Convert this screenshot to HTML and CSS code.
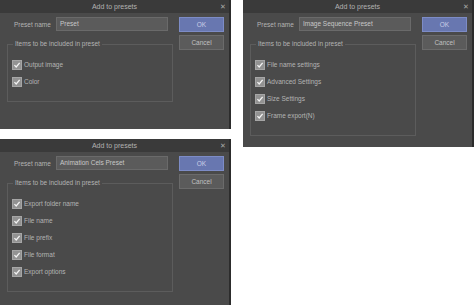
FILE: index.html
```html
<!doctype html>
<html lang="en">
  <head>
    <meta charset="UTF-8" />
    <meta name="viewport" content="width=device-width, initial-scale=1.0" />
    <title>Add to presets</title>
    <link rel="stylesheet" href="styles.css">
  </head>
  <body>
    <div class="column">
      <!-- Output image preset -->
      <div class="dialog dialog-small">
        <div class="titlebar">
          <span></span>
          <span class="title">Add to presets</span>
          <span class="close">✕</span>
        </div>
        <div class="dialog-body">
          <div class="main">
            <div class="name-row">
              <label>Preset name</label>
              <div class="name-input">Preset</div>
            </div>
            <div class="group">
              <span class="group-title">Items to be included in preset</span>
              <div class="items">
                <div class="item"><span class="check"><svg viewBox="0 0 10 10"><path d="M1.8 5.2 L4 7.5 L8.3 2.4" /></svg></span>Output image</div>
                <div class="item"><span class="check"><svg viewBox="0 0 10 10"><path d="M1.8 5.2 L4 7.5 L8.3 2.4" /></svg></span>Color</div>
              </div>
            </div>
          </div>
          <div class="buttons">
            <button class="btn btn-ok">OK</button>
            <button class="btn">Cancel</button>
          </div>
        </div>
      </div>

      <!-- Animation cels preset -->
      <div class="dialog dialog-tall">
        <div class="titlebar">
          <span></span>
          <span class="title">Add to presets</span>
          <span class="close">✕</span>
        </div>
        <div class="dialog-body">
          <div class="main">
            <div class="name-row">
              <label>Preset name</label>
              <div class="name-input">Animation Cels Preset</div>
            </div>
            <div class="group">
              <span class="group-title">Items to be included in preset</span>
              <div class="items">
                <div class="item"><span class="check"><svg viewBox="0 0 10 10"><path d="M1.8 5.2 L4 7.5 L8.3 2.4" /></svg></span>Export folder name</div>
                <div class="item"><span class="check"><svg viewBox="0 0 10 10"><path d="M1.8 5.2 L4 7.5 L8.3 2.4" /></svg></span>File name</div>
                <div class="item"><span class="check"><svg viewBox="0 0 10 10"><path d="M1.8 5.2 L4 7.5 L8.3 2.4" /></svg></span>File prefix</div>
                <div class="item"><span class="check"><svg viewBox="0 0 10 10"><path d="M1.8 5.2 L4 7.5 L8.3 2.4" /></svg></span>File format</div>
                <div class="item"><span class="check"><svg viewBox="0 0 10 10"><path d="M1.8 5.2 L4 7.5 L8.3 2.4" /></svg></span>Export options</div>
              </div>
            </div>
          </div>
          <div class="buttons">
            <button class="btn btn-ok">OK</button>
            <button class="btn">Cancel</button>
          </div>
        </div>
      </div>
    </div>

    <!-- Image sequence preset -->
    <div class="dialog dialog-medium">
      <div class="titlebar">
        <span></span>
        <span class="title">Add to presets</span>
        <span class="close">✕</span>
      </div>
      <div class="dialog-body">
        <div class="main">
          <div class="name-row">
            <label>Preset name</label>
            <div class="name-input">Image Sequence Preset</div>
          </div>
          <div class="group">
            <span class="group-title">Items to be included in preset</span>
            <div class="items">
              <div class="item"><span class="check"><svg viewBox="0 0 10 10"><path d="M1.8 5.2 L4 7.5 L8.3 2.4" /></svg></span>File name settings</div>
              <div class="item"><span class="check"><svg viewBox="0 0 10 10"><path d="M1.8 5.2 L4 7.5 L8.3 2.4" /></svg></span>Advanced Settings</div>
              <div class="item"><span class="check"><svg viewBox="0 0 10 10"><path d="M1.8 5.2 L4 7.5 L8.3 2.4" /></svg></span>Size Settings</div>
              <div class="item"><span class="check"><svg viewBox="0 0 10 10"><path d="M1.8 5.2 L4 7.5 L8.3 2.4" /></svg></span>Frame export(N)</div>
            </div>
          </div>
        </div>
        <div class="buttons">
          <button class="btn btn-ok">OK</button>
          <button class="btn">Cancel</button>
        </div>
      </div>
    </div>
  </body>
</html>
```

FILE: styles.css
```css
body {
  margin: 0;
  background-color: #fff;
  font-family: "Liberation Sans", Arial, sans-serif;
  color: #b4b4b4;
  display: flex;
  gap: 12px;
  height: 305px;
  overflow: hidden;
}
.column {
  display: flex;
  flex-direction: column;
  gap: 10px;
}
/* Dialog frame */
.dialog {
  width: 231px;
  box-sizing: border-box;
  background-color: #4a4a4a;
  border-right: 2px solid #2c2c2c;
  overflow: hidden;
}
.dialog-small {
  height: 129px;
}
.dialog-medium {
  height: 147px;
}
.dialog-tall {
  height: 166px;
}
.titlebar {
  height: 13px;
  background-color: #3a3a3a;
  display: grid;
  grid-template-columns: 1fr auto 1fr;
  align-items: center;
  font-size: 7px;
  line-height: 13px;
}
.title {
  color: #b2b2b2;
}
.close {
  justify-self: end;
  padding-right: 3px;
  font-size: 7px;
  color: #a8a8a8;
}
.dialog-body {
  display: flex;
  padding: 4px 5px 0 7px;
}
.main {
  width: 166px;
}
.name-row {
  display: flex;
  align-items: center;
  height: 14px;
  font-size: 6.5px;
}
.name-row label {
  width: 42px;
  padding-left: 7px;
}
.name-input {
  width: 112px;
  height: 14px;
  box-sizing: border-box;
  background-color: #5b5b5b;
  border: 1px solid #6a6a6a;
  padding-left: 3px;
  line-height: 12px;
  color: #c8c8c8;
}
/* Group box */
.group {
  margin-top: 13px;
  border: 1px solid #5c5c5c;
  padding: 0 0 11px 4px;
  font-size: 6.5px;
}
.group-title {
  display: block;
  width: max-content;
  margin: -5px 0 0 1px;
  padding: 0 2px;
  background-color: #4a4a4a;
  line-height: 8px;
}
.items {
  padding-top: 8px;
}
.item {
  display: flex;
  align-items: center;
  height: 17px;
}
.check {
  width: 10px;
  height: 10px;
  box-sizing: border-box;
  background-color: #929292;
  border: 1px solid #a6a6a6;
  margin-right: 2px;
  display: flex;
}
.check svg {
  width: 8px;
  height: 8px;
}
.check path {
  fill: none;
  stroke: #f4f4f4;
  stroke-width: 1.6;
}
/* Buttons */
.buttons {
  margin-left: 6px;
  display: flex;
  flex-direction: column;
  gap: 3px;
}
.btn {
  width: 45px;
  height: 15px;
  padding: 0;
  font-family: inherit;
  font-size: 6.5px;
  color: #c0c0c0;
  background-color: #5b5b5b;
  border: 1px solid #6b6b6b;
}
.btn-ok {
  background-color: #6877b0;
  border-color: #7d8cc6;
  color: #c8cde6;
}
```
